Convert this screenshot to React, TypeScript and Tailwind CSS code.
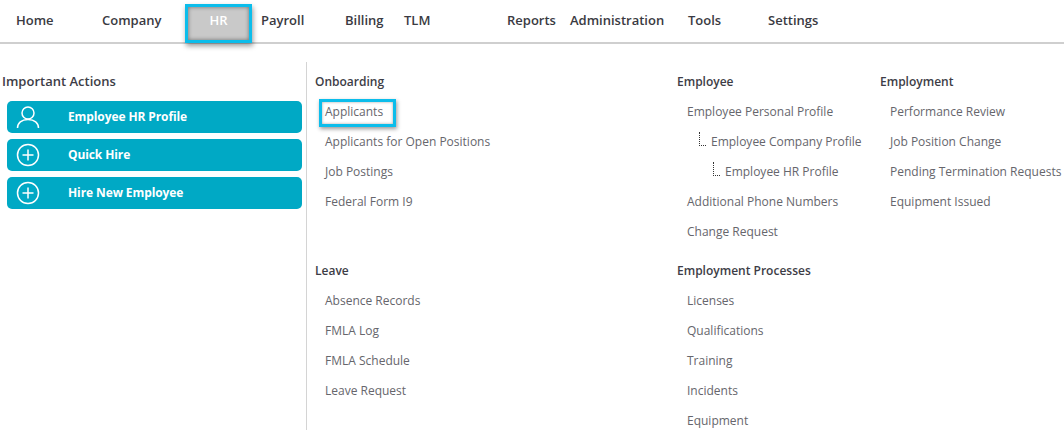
const navItems = [
  { label: 'Home', width: 'w-[102px]', pad: 'pl-4' },
  { label: 'Company', width: 'w-[83px]', pad: 'pl-0' },
  { label: 'HR', width: 'w-[67px]', pad: '' },
  { label: 'Payroll', width: 'w-[93px]', pad: 'pl-[9px]' },
  { label: 'Billing', width: 'w-[59px]', pad: 'pl-0' },
  { label: 'TLM', width: 'w-[103px]', pad: 'pl-0' },
  { label: 'Reports', width: 'w-[63px]', pad: 'pl-0' },
  { label: 'Administration', width: 'w-[118px]', pad: 'pl-0' },
  { label: 'Tools', width: 'w-[80px]', pad: 'pl-0' },
  { label: 'Settings', width: 'w-[80px]', pad: 'pl-0' },
];

const PersonIcon = () => (
  <svg width="24" height="26" viewBox="0 0 24 26" fill="none" stroke="white" strokeWidth="1.5">
    <circle cx="12" cy="9" r="6" />
    <path d="M1.5 24c0-5 4-8.5 10.5-8.5S22.500 19 22.500 24" />
  </svg>
);

const PlusIcon = () => (
  <svg width="24" height="24" viewBox="0 0 24 24" fill="none" stroke="white" strokeWidth="1.5">
    <circle cx="12" cy="12" r="10.500" />
    <path d="M12 6.500v11M6.500 12h11" />
  </svg>
);

const Section = ({ title, children, className = '' }: { title: string; children: React.ReactNode; className?: string }) => (
  <div className={className}>
    <h3 className="h-[35px] text-[12px] leading-[40px] font-semibold text-[#3d3d46]">{title}</h3>
    <ul className="text-[12px] text-[#66666c]">{children}</ul>
  </div>
);

const Item = ({ label, indent = 'pl-[10px]', tree, boxed }: { label: string; indent?: string; tree?: boolean; boxed?: boolean }) => (
  <li className={`h-[30px] flex items-center ${indent}`}>
    {tree && <span className="w-[7px] h-[14px] mr-[5px] -mt-[7px] border-l border-b border-dotted border-[#333]" />}
    {boxed ? (
      <span className="relative">
        <span className="absolute -left-[6px] -top-[4px] w-[77px] h-[28px] border-[3px] border-[#0cbdeb] shadow-[inset_0_0_3px_rgba(0,0,0,0.35),1px_2px_4px_rgba(0,0,0,0.4)]" />
        {label}
      </span>
    ) : (
      label
    )}
  </li>
);

const App = () => {
  return (
    <div className="w-[1064px] h-[430px] overflow-hidden bg-white font-['Open_Sans','Noto_Sans',sans-serif]">
      <nav className="h-[44px] flex border-b-2 border-[#cfcfcf] text-[13px] font-semibold text-[#3a3a42]">
        {navItems.map((item) =>
          item.label === 'HR' ? (
            <div
              key={item.label}
              className="relative w-[67px] h-[39px] mt-[4px] pb-[6px] shrink-0 flex items-center justify-center bg-[#c9c9c9] text-white border-[3px] border-[#0cbdeb] shadow-[inset_0_0_4px_rgba(0,0,0,0.45),1px_3px_5px_rgba(0,0,0,0.4)]"
            >
              HR
            </div>
          ) : (
            <div key={item.label} className={`${item.width} ${item.pad} h-[42px] leading-[41px] shrink-0 whitespace-nowrap`}>
              {item.label}
            </div>
          ),
        )}
      </nav>

      <div className="flex mt-[18px]">
        <div className="w-[307px] h-[368px] shrink-0 border-r border-[#d4d4d4] pr-[4px]">
          <h3 className="h-[39px] pl-[2px] text-[13px] leading-[38px] font-semibold text-[#3d3d46]">Important Actions</h3>
          <div className="pl-[7px] flex flex-col gap-[6px]">
            {[
              { label: 'Employee HR Profile', icon: <PersonIcon /> },
              { label: 'Quick Hire', icon: <PlusIcon /> },
              { label: 'Hire New Employee', icon: <PlusIcon /> },
            ].map((action) => (
              <div key={action.label} className="h-[32px] w-[295px] rounded-[5px] bg-[#00a9c5] flex items-center text-white text-[12px] font-bold tracking-[-0.1px]">
                <span className="w-[61px] pl-[9px] flex items-center">{action.icon}</span>
                {action.label}
              </div>
            ))}
          </div>
        </div>

        <div className="w-[370px] pl-[8px] shrink-0">
          <Section title="Onboarding" className="h-[189px]">
            <Item label="Applicants" boxed />
            <Item label="Applicants for Open Positions" />
            <Item label="Job Postings" />
            <Item label="Federal Form I9" />
          </Section>
          <Section title="Leave">
            <Item label="Absence Records" />
            <Item label="FMLA Log" />
            <Item label="FMLA Schedule" />
            <Item label="Leave Request" />
          </Section>
        </div>

        <div className="w-[203px] shrink-0">
          <Section title="Employee" className="h-[189px]">
            <Item label="Employee Personal Profile" />
            <Item label="Employee Company Profile" indent="pl-[22px]" tree />
            <Item label="Employee HR Profile" indent="pl-[36px]" tree />
            <Item label="Additional Phone Numbers" />
            <Item label="Change Request" />
          </Section>
          <Section title="Employment Processes">
            <Item label="Licenses" />
            <Item label="Qualifications" />
            <Item label="Training" />
            <Item label="Incidents" />
            <Item label="Equipment" />
          </Section>
        </div>

        <div className="w-[184px] shrink-0 whitespace-nowrap">
          <Section title="Employment">
            <Item label="Performance Review" />
            <Item label="Job Position Change" />
            <Item label="Pending Termination Requests" />
            <Item label="Equipment Issued" />
          </Section>
        </div>
      </div>
    </div>
  );
};

export default App;
